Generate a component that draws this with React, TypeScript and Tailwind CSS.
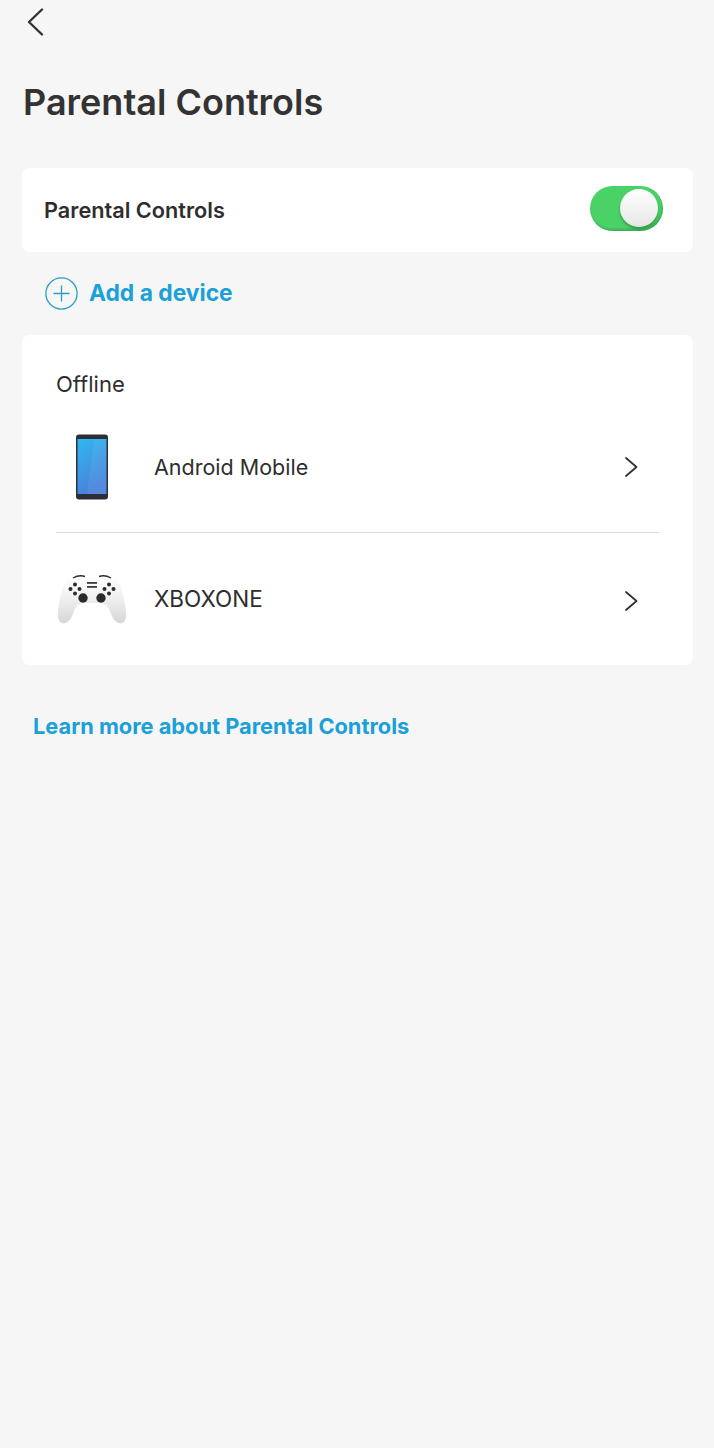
import React from "react";

function Chevron({ className }: { className?: string }) {
  return (
    <svg viewBox="0 0 14 20" className={className} fill="none" stroke="#2e2e2e" strokeWidth="1.7">
      <path d="M2 1 L12.5 10 L2 19" strokeLinecap="round" strokeLinejoin="round" />
    </svg>
  );
}

function BackChevron() {
  return (
    <svg width="17" height="29" viewBox="0 0 17 29" fill="none" stroke="#333333" strokeWidth="2.4">
      <path d="M15 1.5 L2 14 L15 26.5" strokeLinecap="round" strokeLinejoin="round" />
    </svg>
  );
}

function Phone() {
  return (
    <svg width="34" height="66" viewBox="0 0 34 66">
      <defs>
        <linearGradient id="scr" x1="0" y1="0" x2="0.3" y2="1">
          <stop offset="0" stopColor="#2fb8ee" />
          <stop offset="1" stopColor="#4a82dc" />
        </linearGradient>
      </defs>
      <rect x="1" y="0.5" width="32" height="65" rx="3" fill="#2b3038" />
      <rect x="2.5" y="5" width="29" height="55" fill="url(#scr)" />
      <path d="M19 5 L31.5 5 L31.5 60 L12 60 Z" fill="#ffffff" opacity="0.06" />
    </svg>
  );
}

function Pad() {
  return (
    <svg width="70" height="50" viewBox="0 0 70 50">
      <defs>
        <linearGradient id="pad" x1="0" y1="0" x2="0" y2="1">
          <stop offset="0" stopColor="#fcfcfc" />
          <stop offset="0.4" stopColor="#f2f2f2" />
          <stop offset="1" stopColor="#d6d6d6" />
        </linearGradient>
      </defs>
      <path
        d="M11 6 C20 3 50 3 59 6 C64 9 66 18 68 30 C70 40 70 47 65 49 C59 50.5 55 44 53 37 C51 31 46 29 41 29 L29 29 C24 29 19 31 17 37 C15 44 11 50.5 5 49 C0 47 0 40 2 30 C4 18 6 9 11 6 Z"
        fill="url(#pad)"
      />
      <path d="M16 4 Q22 0.5 28 2.5 M42 2.5 Q48 0.5 54 4" stroke="#2b2b2b" strokeWidth="1.4" fill="none" />
      <rect x="30" y="8" width="10" height="1.8" fill="#3a3a3a" />
      <rect x="30" y="12" width="10" height="1.8" fill="#3a3a3a" />
      <g fill="#2b2b2b">
        <circle cx="18" cy="10.5" r="2" />
        <circle cx="18" cy="19.5" r="2" />
        <circle cx="13.5" cy="15" r="2" />
        <circle cx="22.5" cy="15" r="2" />
        <circle cx="52" cy="10.5" r="2" />
        <circle cx="52" cy="19.5" r="2" />
        <circle cx="47.5" cy="15" r="2" />
        <circle cx="56.5" cy="15" r="2" />
        <circle cx="26" cy="24" r="4.7" />
        <circle cx="44" cy="24" r="4.7" />
      </g>
    </svg>
  );
}

export default function App() {
  return (
    <div className="min-h-[1448px] w-[714px] bg-[#f6f6f6] text-[#2e2e2e] font-['Inter',sans-serif]">
      <div className="pl-[27px] pt-[8px]">
        <BackChevron />
      </div>
      <h1 className="mt-[43px] pl-[23px] text-[36px] leading-[44px] font-semibold text-[#333333]">
        Parental Controls
      </h1>
      <div className="ml-[22px] mt-[44px] flex h-[84px] w-[671px] items-center justify-between rounded-[8px] bg-white pl-[22px] pr-[30px]">
        <span className="text-[21.7px] font-semibold">Parental Controls</span>
        <div className="relative mb-[3px] h-[45px] w-[73px] rounded-full bg-[#4bd267] shadow-[inset_-1px_-2px_2px_rgba(40,120,70,0.4)]">
          <div className="absolute right-[5px] top-[3px] h-[38px] w-[38px] rounded-full bg-gradient-to-b from-white to-[#e6e6e6] shadow-[0_2px_3px_rgba(0,0,0,0.3)]" />
        </div>
      </div>
      <div className="mt-[24px] ml-[45px] flex h-[34px] items-center gap-[11px]">
        <svg width="33" height="33" viewBox="0 0 33 33" fill="none" stroke="#2c9dc4" strokeWidth="1.3">
          <circle cx="16.5" cy="16.5" r="15.6" />
          <path d="M16.5 8.5 V24.5 M8.5 16.5 H24.5" />
        </svg>
        <span className="mt-[1px] text-[22.8px] font-bold text-[#1ba0d8]">Add a device</span>
      </div>
      <div className="ml-[22px] mt-[25px] h-[330px] w-[671px] rounded-[8px] bg-white px-[34px] pt-[35px]">
        <div className="-mt-[1px] mb-[1px] text-[22px] leading-[30px] text-[#2e2e2e]">Offline</div>
        <div className="flex h-[133px] items-center border-b border-[#d9d9d9] pt-[1px]">
          <div className="flex w-[72px] justify-center">
            <Phone />
          </div>
          <span className="ml-[26px] mt-[2px] flex-1 text-[21.5px]">Android Mobile</span>
          <Chevron className="mr-[21px] h-[20px] w-[14px]" />
        </div>
        <div className="flex h-[132px] items-center">
          <div className="flex w-[71px] justify-center">
            <Pad />
          </div>
          <span className="ml-[27px] flex-1 text-[22.5px]">XBOXONE</span>
          <Chevron className="mr-[21px] mt-[4px] h-[20px] w-[14px]" />
        </div>
      </div>
      <div className="mt-[44px] pl-[33px] text-[21.8px] leading-[34px] font-bold text-[#1ba0d8]">
        Learn more about Parental Controls
      </div>
    </div>
  );
}
